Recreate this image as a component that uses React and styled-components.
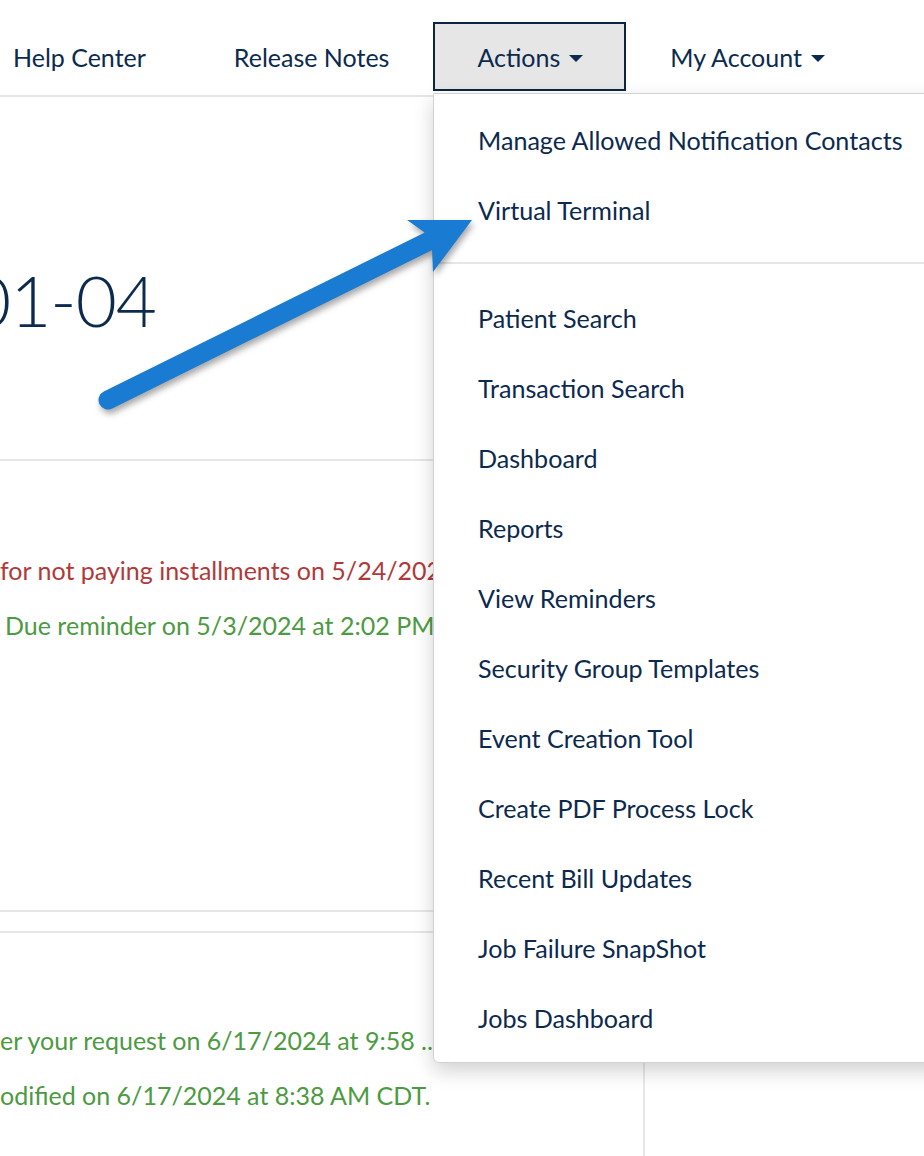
import React from "react";
import styled, { createGlobalStyle } from "styled-components";

const GlobalStyle = createGlobalStyle`
  html, body {
    margin: 0;
    padding: 0;
    overflow: hidden;
    background: #ffffff;
  }
  body {
    font-family: Lato, "Open Sans", "Liberation Sans", sans-serif;
  }
`;

const navy = "#0c2a4e";

const Page = styled.div`
  position: relative;
  width: 924px;
  height: 1156px;
  overflow: hidden;
  background: #fff;
`;

const Nav = styled.nav`
  display: flex;
  align-items: flex-start;
  height: 97px;
  padding-top: 22px;
  box-sizing: border-box;
  margin-left: -31px;
  border-bottom: 2px solid #e6e6e6;
`;

const NavItem = styled.div`
  display: flex;
  flex-shrink: 0;
  align-items: center;
  height: 69px;
  padding: 0 ${(p) => (p.$active ? "41px" : "42px")} 0 42px;
  box-sizing: border-box;
  border: 2px solid ${(p) => (p.$active ? "#0b2545" : "transparent")};
  background: ${(p) => (p.$active ? "#e6e6e6" : "transparent")};
  color: ${navy};
  font-size: 25px;
  font-weight: 400;
  white-space: nowrap;
`;

const Caret = styled.span`
  display: inline-block;
  width: 0;
  height: 0;
  margin-left: 9px;
  margin-top: 3px;
  border-top: 7px solid ${navy};
  border-left: 7px solid transparent;
  border-right: 7px solid transparent;
`;

const Body = styled.div`
  display: grid;
  grid-template-columns: 643px 1fr;
  min-height: 1059px;
`;

const Main = styled.div`
  display: flex;
  flex-direction: column;
`;

const Side = styled.div`
  border-left: 2px solid #e8e8e8;
`;

const TitleBlock = styled.div`
  height: 364px;
  box-sizing: border-box;
  padding-top: 167px;
  border-bottom: 2px solid #e6e6e6;
`;

const Title = styled.h1`
  margin: 0 0 0 -30px;
  font-size: 71px;
  line-height: 72px;
  font-weight: 300;
  letter-spacing: -1px;
  color: ${navy};
  white-space: nowrap;
`;

const Panel = styled.div`
  padding-top: ${(p) => p.$top}px;
  height: ${(p) => p.$height}px;
  box-sizing: border-box;
  border-top: ${(p) => (p.$borderTop ? "2px solid #e6e6e6" : "none")};
  border-bottom: ${(p) => (p.$borderBottom ? "2px solid #e6e6e6" : "none")};
  margin-bottom: ${(p) => p.$gap || 0}px;
`;

const Message = styled.p`
  margin: 0;
  padding-left: ${(p) => p.$indent || 0}px;
  font-size: 25px;
  line-height: 55px;
  color: ${(p) => (p.$tone === "error" ? "#b03a3a" : "#4c9a42")};
  white-space: nowrap;
`;

const Dropdown = styled.ul`
  position: absolute;
  top: 93px;
  left: 433px;
  width: 540px;
  margin: 0;
  padding: 11px 0 9px;
  list-style: none;
  background: #fff;
  border: 1px solid #d2d2d2;
  border-radius: 0 0 6px 6px;
  box-shadow: 0 8px 20px rgba(0, 0, 0, 0.18);
`;

const MenuItem = styled.li`
  height: 70px;
  padding-left: 44px;
  font-size: 25.1px;
  font-weight: 400;
  line-height: 70px;
  color: ${navy};
  white-space: nowrap;
`;

const Divider = styled.li`
  height: 2px;
  margin: 17px 0 19px;
  background: #e6e6e6;
`;

const Overlay = styled.svg`
  position: absolute;
  left: 0;
  top: 0;
  pointer-events: none;
  filter: drop-shadow(2px 4px 3px rgba(0, 0, 0, 0.35));
`;

const topItems = ["Manage Allowed Notification Contacts", "Virtual Terminal"];
const mainItems = [
  "Patient Search",
  "Transaction Search",
  "Dashboard",
  "Reports",
  "View Reminders",
  "Security Group Templates",
  "Event Creation Tool",
  "Create PDF Process Lock",
  "Recent Bill Updates",
  "Job Failure SnapShot",
  "Jobs Dashboard",
];

function Arrow() {
  return (
    <Overlay width="924" height="1156" viewBox="0 0 924 1156">
      <line
        x1="108"
        y1="400"
        x2="429"
        y2="241"
        stroke="#197bd1"
        strokeWidth="19"
        strokeLinecap="round"
      />
      <polygon
        points="472,220 407,220 424,232 432,249 433,272"
        fill="#197bd1"
      />
    </Overlay>
  );
}

export default function App() {
  return (
    <Page>
      <GlobalStyle />
      <Nav>
        <NavItem>Help Center</NavItem>
        <NavItem>Release Notes</NavItem>
        <NavItem $active>
          Actions
          <Caret />
        </NavItem>
        <NavItem>
          My Account
          <Caret />
        </NavItem>
      </Nav>

      <Body>
        <Main>
          <TitleBlock>
            <Title>01-04</Title>
          </TitleBlock>
          <Panel $top={82} $height={451} $borderBottom $gap={19}>
            <Message $tone="error">for not paying installments on 5/24/2024.</Message>
            <Message $indent={5}>Due reminder on 5/3/2024 at 2:02 PM CDT.</Message>
          </Panel>
          <Panel $top={80} $borderTop>
            <Message>er your request on 6/17/2024 at 9:58 ...</Message>
            <Message>odified on 6/17/2024 at 8:38 AM CDT.</Message>
          </Panel>
        </Main>
        <Side />
      </Body>

      <Dropdown>
        {topItems.map((item) => (
          <MenuItem key={item}>{item}</MenuItem>
        ))}
        <Divider />
        {mainItems.map((item) => (
          <MenuItem key={item}>{item}</MenuItem>
        ))}
      </Dropdown>

      <Arrow />
    </Page>
  );
}
